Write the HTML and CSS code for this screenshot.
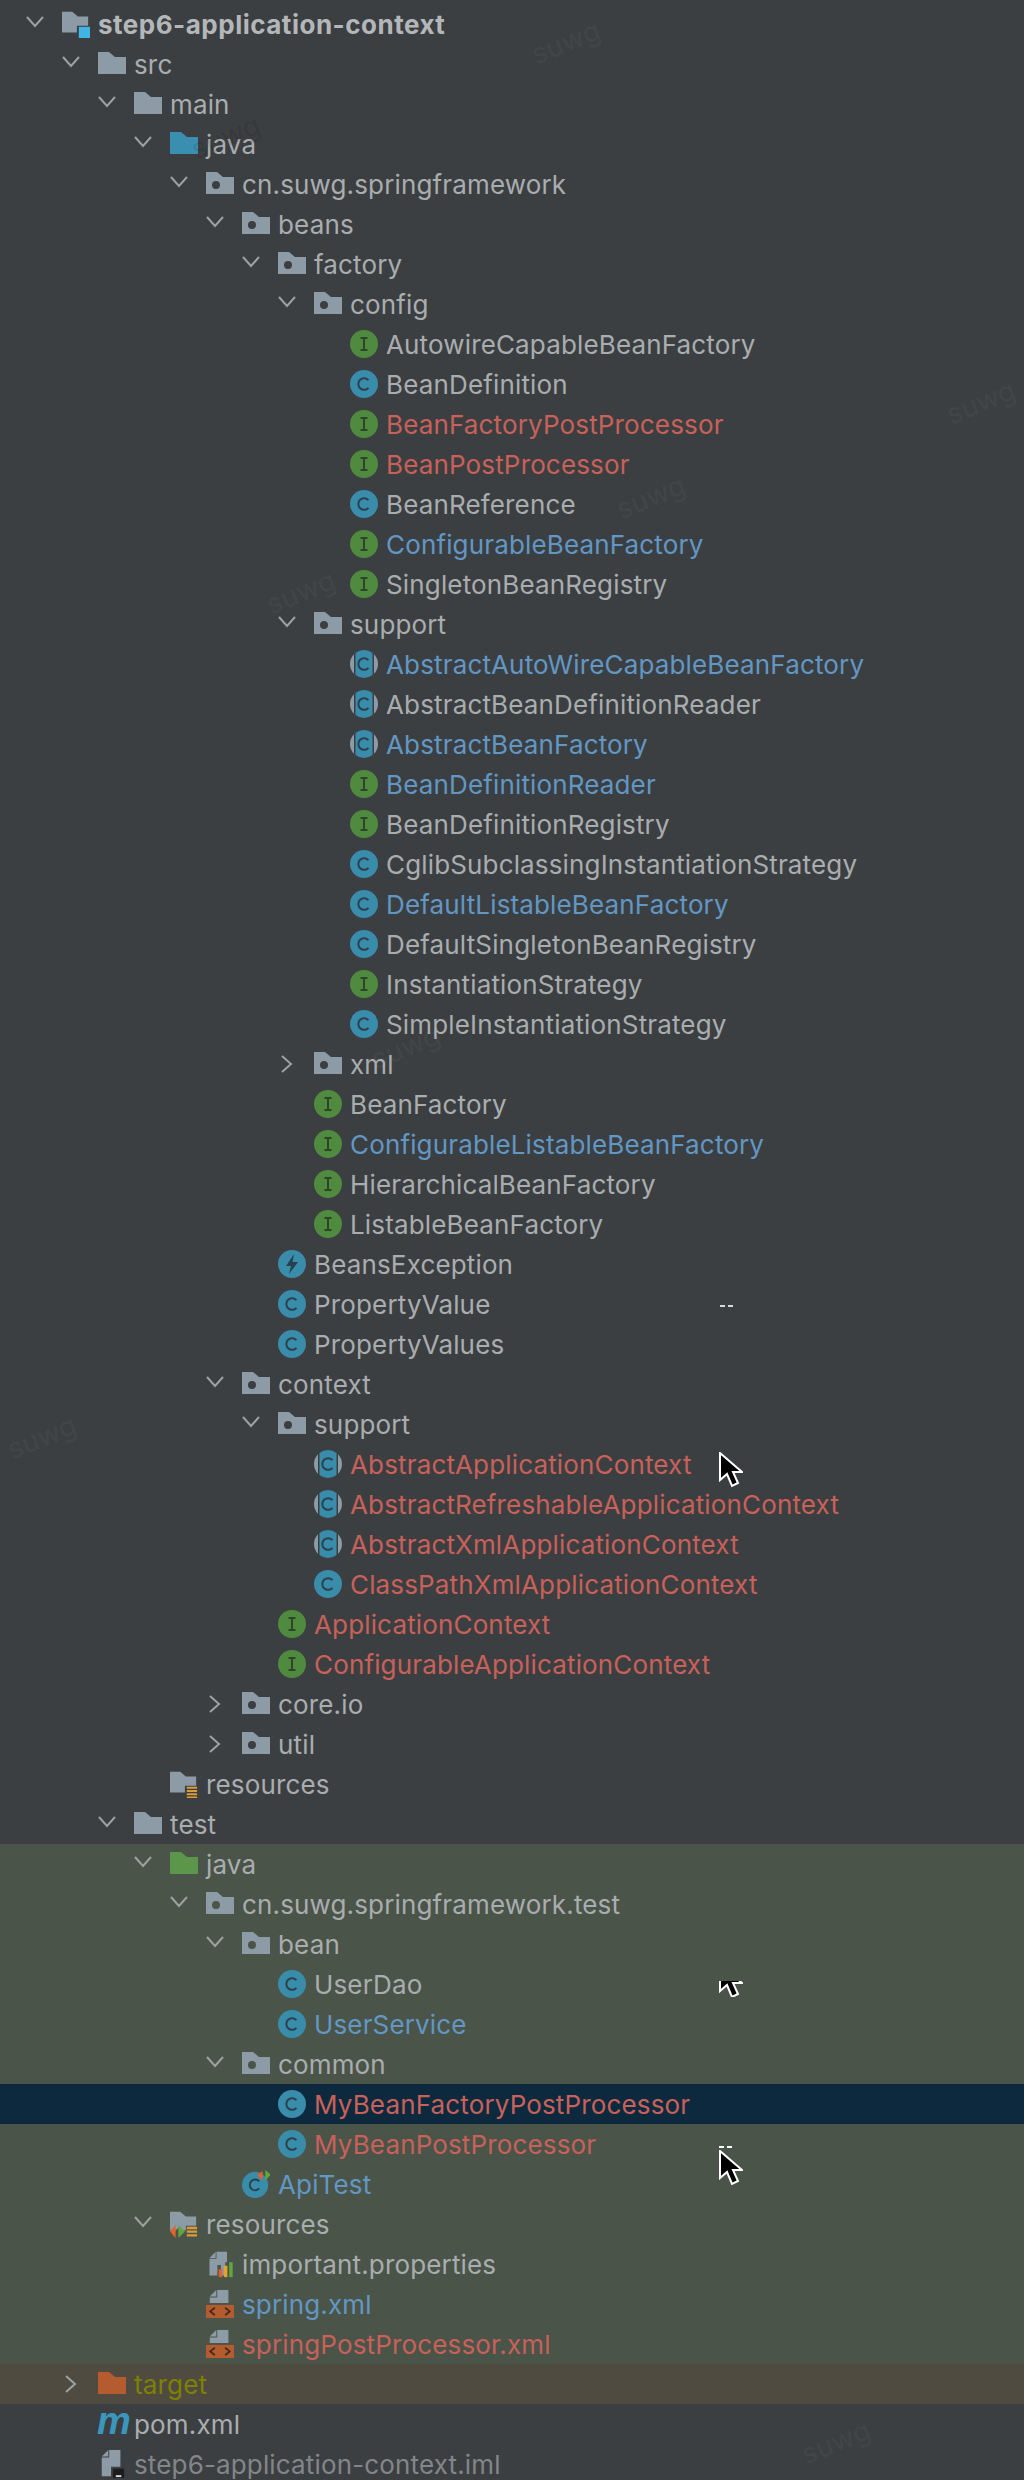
FILE: index.html
```html
<!DOCTYPE html>
<html lang="en">
<head>
  <meta charset="UTF-8">
  <meta name="viewport" content="width=device-width, initial-scale=1.0">
  <title>step6-application-context</title>
  <link rel="stylesheet" href="styles.css">
</head>
<body>

  <!-- icon sprites -->
  <svg class="sprites" width="0" height="0">
    <symbol id="open" viewBox="0 0 18 12"><path d="M1 1l8 9 8-9" fill="none" stroke="currentColor" stroke-width="2"/></symbol>
    <symbol id="closed" viewBox="0 0 12 18"><path d="M1 1l9 8-9 8" fill="none" stroke="currentColor" stroke-width="2"/></symbol>

    <symbol id="folder" viewBox="0 0 28 28"><path d="M0 2h11l6 5h11v17H0z" fill="currentColor"/></symbol>
    <symbol id="package" viewBox="0 0 28 28"><path fill-rule="evenodd" d="M0 2h11l6 5h11v17H0zM10 11a4 4 0 1 0 0 8 4 4 0 0 0 0-8z" fill="currentColor"/></symbol>
    <symbol id="module" viewBox="0 0 30 30"><path d="M0 2h11l6 5h11v10H16v7H0z" fill="#8d9ba6"/><path d="M18 18h12v12H18z" fill="#3fb4e5"/></symbol>
    <symbol id="res" viewBox="0 0 30 30"><path d="M0 2h11l6 5h11v10H16v7H0z" fill="#8d9ba6"/><path d="M18 18h11v2H18zM18 21.500h11v2H18zM18 25h11v2H18zM18 28.500h11v2H18z" fill="#d99b3c"/></symbol>
    <symbol id="restest" viewBox="0 0 30 30"><path d="M0 2h11l6 5h11v10H17v5H12l-3-3-3 3H0z" fill="#8d9ba6"/><path d="M18 18h11v2.500H18zM18 22h11v2.500H18zM18 26h11v2.500H18z" fill="#d99b3c"/><path d="M6 16l-6 7 6 7z" fill="#e2622a"/><path d="M9 16l7 7-7 7z" fill="#5ea83f"/></symbol>

    <symbol id="iface" viewBox="0 0 28 28"><circle cx="14" cy="14" r="14" fill="#4f8a3f"/><path d="M10.500 8h7M10.500 20h7M14 8v12" fill="none" stroke="#2d4529" stroke-width="2"/></symbol>
    <symbol id="class" viewBox="0 0 28 28"><circle cx="14" cy="14" r="14" fill="#3a8cab"/><path d="M18.500 10.200a5.800 5.800 0 1 0 0 7.600" fill="none" stroke="#27414e" stroke-width="2"/></symbol>
    <symbol id="abstract" viewBox="0 0 28 28"><path d="M4 4.200a14 14 0 0 0 0 19.600zM24 4.200a14 14 0 0 1 0 19.600z" fill="#8d9ba6"/><path d="M5.500 2.900a14 14 0 0 1 17 0v22.200a14 14 0 0 1-17 0z" fill="#3a8cab"/><path d="M18.500 10.200a5.800 5.800 0 1 0 0 7.600" fill="none" stroke="#27414e" stroke-width="2"/></symbol>
    <symbol id="exception" viewBox="0 0 28 28"><circle cx="14" cy="14" r="14" fill="#3a8cab"/><path d="M16 4L8 16h5l-2 8 9-12h-5.500z" fill="#27414e"/></symbol>
    <symbol id="testclass" viewBox="0 0 30 30"><circle cx="14" cy="16" r="14" fill="#3a8cab"/><path d="M18.500 12.200a5.800 5.800 0 1 0 0 7.600" fill="none" stroke="#27414e" stroke-width="2"/><path d="M22 1l-6 5 6 5z" fill="#e2622a"/><path d="M25 0l6 5-6 6z" fill="#5ea83f"/></symbol>

    <symbol id="props" viewBox="0 0 32 30"><path d="M4 8l7-7v7zM12 1h12v12h-2v15h-5V16h-4v12H4V9h8z" fill="#8d9ba6"/><path d="M14.500 21h4v9h-4z" fill="#e2622a"/><path d="M20.500 17h4v13h-4z" fill="#e0a32e"/><path d="M26.500 13h4v17h-4z" fill="#5ea83f"/></symbol>
    <symbol id="xml" viewBox="0 0 30 30"><path d="M4 7l7-7v7zM12 0h12v14H4V8h8z" fill="#8d9ba6"/><path d="M0 16h30v14H0z" fill="#b45c2e"/><path d="M9.500 19l-5 4 5 4M20.500 19l5 4-5 4" fill="none" stroke="#3a2a1c" stroke-width="1.800"/></symbol>
    <symbol id="iml" viewBox="0 0 30 30"><path d="M4 7l7-7v7zM12 0h12v18H14v10H4V8h8z" fill="#8d9ba6"/><path d="M16 20h12v12H16z" fill="#1c1c1e"/><path d="M19 27h6v2h-6z" fill="#ddd"/></symbol>
    <symbol id="pointer" viewBox="0 0 24 36"><path d="M1 1v27l7-6 5 12 6-3-5-11h9z" fill="#000" stroke="#fff" stroke-width="2"/></symbol>
  </svg>

  <div class="tree">
    <div class="row l0 root"><svg class="chev"><use href="#open"/></svg><svg class="ico"><use href="#module"/></svg><span>step6-application-context</span></div>
    <div class="row l1"><svg class="chev"><use href="#open"/></svg><svg class="ico grey"><use href="#folder"/></svg><span>src</span></div>
    <div class="row l2"><svg class="chev"><use href="#open"/></svg><svg class="ico grey"><use href="#folder"/></svg><span>main</span></div>
    <div class="row l3"><svg class="chev"><use href="#open"/></svg><svg class="ico blue"><use href="#folder"/></svg><span>java</span></div>
    <div class="row l4"><svg class="chev"><use href="#open"/></svg><svg class="ico grey"><use href="#package"/></svg><span>cn.suwg.springframework</span></div>
    <div class="row l5"><svg class="chev"><use href="#open"/></svg><svg class="ico grey"><use href="#package"/></svg><span>beans</span></div>
    <div class="row l6"><svg class="chev"><use href="#open"/></svg><svg class="ico grey"><use href="#package"/></svg><span>factory</span></div>
    <div class="row l7"><svg class="chev"><use href="#open"/></svg><svg class="ico grey"><use href="#package"/></svg><span>config</span></div>
    <div class="row l9"><svg class="ico"><use href="#iface"/></svg><span>AutowireCapableBeanFactory</span></div>
    <div class="row l9"><svg class="ico"><use href="#class"/></svg><span>BeanDefinition</span></div>
    <div class="row l9 added"><svg class="ico"><use href="#iface"/></svg><span>BeanFactoryPostProcessor</span></div>
    <div class="row l9 added"><svg class="ico"><use href="#iface"/></svg><span>BeanPostProcessor</span></div>
    <div class="row l9"><svg class="ico"><use href="#class"/></svg><span>BeanReference</span></div>
    <div class="row l9 changed"><svg class="ico"><use href="#iface"/></svg><span>ConfigurableBeanFactory</span></div>
    <div class="row l9"><svg class="ico"><use href="#iface"/></svg><span>SingletonBeanRegistry</span></div>
    <div class="row l7"><svg class="chev"><use href="#open"/></svg><svg class="ico grey"><use href="#package"/></svg><span>support</span></div>
    <div class="row l9 changed"><svg class="ico"><use href="#abstract"/></svg><span>AbstractAutoWireCapableBeanFactory</span></div>
    <div class="row l9"><svg class="ico"><use href="#abstract"/></svg><span>AbstractBeanDefinitionReader</span></div>
    <div class="row l9 changed"><svg class="ico"><use href="#abstract"/></svg><span>AbstractBeanFactory</span></div>
    <div class="row l9 changed"><svg class="ico"><use href="#iface"/></svg><span>BeanDefinitionReader</span></div>
    <div class="row l9"><svg class="ico"><use href="#iface"/></svg><span>BeanDefinitionRegistry</span></div>
    <div class="row l9"><svg class="ico"><use href="#class"/></svg><span>CglibSubclassingInstantiationStrategy</span></div>
    <div class="row l9 changed"><svg class="ico"><use href="#class"/></svg><span>DefaultListableBeanFactory</span></div>
    <div class="row l9"><svg class="ico"><use href="#class"/></svg><span>DefaultSingletonBeanRegistry</span></div>
    <div class="row l9"><svg class="ico"><use href="#iface"/></svg><span>InstantiationStrategy</span></div>
    <div class="row l9"><svg class="ico"><use href="#class"/></svg><span>SimpleInstantiationStrategy</span></div>
    <div class="row l7"><svg class="chev-r"><use href="#closed"/></svg><svg class="ico grey"><use href="#package"/></svg><span>xml</span></div>
    <div class="row l8"><svg class="ico"><use href="#iface"/></svg><span>BeanFactory</span></div>
    <div class="row l8 changed"><svg class="ico"><use href="#iface"/></svg><span>ConfigurableListableBeanFactory</span></div>
    <div class="row l8"><svg class="ico"><use href="#iface"/></svg><span>HierarchicalBeanFactory</span></div>
    <div class="row l8"><svg class="ico"><use href="#iface"/></svg><span>ListableBeanFactory</span></div>
    <div class="row l7"><svg class="ico"><use href="#exception"/></svg><span>BeansException</span></div>
    <div class="row l7"><svg class="ico"><use href="#class"/></svg><span>PropertyValue</span></div>
    <div class="row l7"><svg class="ico"><use href="#class"/></svg><span>PropertyValues</span></div>
    <div class="row l5"><svg class="chev"><use href="#open"/></svg><svg class="ico grey"><use href="#package"/></svg><span>context</span></div>
    <div class="row l6"><svg class="chev"><use href="#open"/></svg><svg class="ico grey"><use href="#package"/></svg><span>support</span></div>
    <div class="row l8 added"><svg class="ico"><use href="#abstract"/></svg><span>AbstractApplicationContext</span></div>
    <div class="row l8 added"><svg class="ico"><use href="#abstract"/></svg><span>AbstractRefreshableApplicationContext</span></div>
    <div class="row l8 added"><svg class="ico"><use href="#abstract"/></svg><span>AbstractXmlApplicationContext</span></div>
    <div class="row l8 added"><svg class="ico"><use href="#class"/></svg><span>ClassPathXmlApplicationContext</span></div>
    <div class="row l7 added"><svg class="ico"><use href="#iface"/></svg><span>ApplicationContext</span></div>
    <div class="row l7 added"><svg class="ico"><use href="#iface"/></svg><span>ConfigurableApplicationContext</span></div>
    <div class="row l5"><svg class="chev-r"><use href="#closed"/></svg><svg class="ico grey"><use href="#package"/></svg><span>core.io</span></div>
    <div class="row l5"><svg class="chev-r"><use href="#closed"/></svg><svg class="ico grey"><use href="#package"/></svg><span>util</span></div>
    <div class="row l4"><svg class="ico"><use href="#res"/></svg><span>resources</span></div>
    <div class="row l2"><svg class="chev"><use href="#open"/></svg><svg class="ico grey"><use href="#folder"/></svg><span>test</span></div>

    <!-- test sources -->
    <div class="test-src">
      <div class="row l3"><svg class="chev"><use href="#open"/></svg><svg class="ico green"><use href="#folder"/></svg><span>java</span></div>
      <div class="row l4"><svg class="chev"><use href="#open"/></svg><svg class="ico grey"><use href="#package"/></svg><span>cn.suwg.springframework.test</span></div>
      <div class="row l5"><svg class="chev"><use href="#open"/></svg><svg class="ico grey"><use href="#package"/></svg><span>bean</span></div>
      <div class="row l7"><svg class="ico"><use href="#class"/></svg><span>UserDao</span></div>
      <div class="row l7 changed"><svg class="ico"><use href="#class"/></svg><span>UserService</span></div>
      <div class="row l5"><svg class="chev"><use href="#open"/></svg><svg class="ico grey"><use href="#package"/></svg><span>common</span></div>
      <div class="row l7 added selected"><svg class="ico"><use href="#class"/></svg><span>MyBeanFactoryPostProcessor</span></div>
      <div class="row l7 added"><svg class="ico"><use href="#class"/></svg><span>MyBeanPostProcessor</span></div>
      <div class="row l6 changed"><svg class="ico"><use href="#testclass"/></svg><span>ApiTest</span></div>
      <div class="row l3"><svg class="chev"><use href="#open"/></svg><svg class="ico"><use href="#restest"/></svg><span>resources</span></div>
      <div class="row l5"><svg class="ico"><use href="#props"/></svg><span>important.properties</span></div>
      <div class="row l5 changed"><svg class="ico"><use href="#xml"/></svg><span>spring.xml</span></div>
      <div class="row l5 added"><svg class="ico"><use href="#xml"/></svg><span>springPostProcessor.xml</span></div>
    </div>

    <div class="row l1 excluded"><svg class="chev-r"><use href="#closed"/></svg><svg class="ico orange"><use href="#folder"/></svg><span>target</span></div>
    <div class="row l2"><svg class="ico pom"><text x="-1" y="24">m</text></svg><span>pom.xml</span></div>
    <div class="row l2 dim"><svg class="ico"><use href="#iml"/></svg><span>step6-application-context.iml</span></div>
  </div>

  <!-- mouse trails left in the capture -->
  <svg class="cursor cursor-a"><use href="#pointer"/></svg>
  <div class="trail trail-a"><svg class="cursor-part"><use href="#pointer"/></svg></div>
  <svg class="cursor cursor-b"><use href="#pointer"/></svg>
  <div class="speck speck-a"></div>
  <div class="speck speck-b"></div>

  <!-- page watermark -->
  <span class="mark m1">suwg</span>
  <span class="mark m2">suwg</span>
  <span class="mark m3">suwg</span>
  <span class="mark m4">suwg</span>
  <span class="mark m5">suwg</span>
  <span class="mark m6">suwg</span>
  <span class="mark m7">suwg</span>
  <span class="mark m8">suwg</span>

</body>
</html>
```

FILE: styles.css
```css
html, body {
  margin: 0;
  padding: 0;
  height: 2480px;
  overflow: hidden;
}
body {
  position: relative;
  background-color: #3c3f41;
  font-family: Inter, "Noto Sans", sans-serif;
  font-size: 26px;
  letter-spacing: 0.15px;
  color: #a9adb0;
}
.sprites {
  position: absolute;
}
.tree {
  padding-top: 4px;
}
.row {
  display: flex;
  align-items: center;
  height: 40px;
  box-sizing: border-box;
  white-space: nowrap;
}
.row span {
  margin-left: 8px;
}
.l0 { padding-left: 26px; }
.l1 { padding-left: 62px; }
.l2 { padding-left: 98px; }
.l3 { padding-left: 134px; }
.l4 { padding-left: 170px; }
.l5 { padding-left: 206px; }
.l6 { padding-left: 242px; }
.l7 { padding-left: 278px; }
.l8 { padding-left: 314px; }
.l9 { padding-left: 350px; }

.chev {
  width: 18px;
  height: 12px;
  margin-right: 18px;
  color: #9da1a4;
  position: relative;
  top: -2px;
}
.chev-r {
  width: 12px;
  height: 18px;
  margin-left: 3px;
  margin-right: 21px;
  color: #9da1a4;
}
.ico {
  width: 28px;
  height: 28px;
  flex-shrink: 0;
  overflow: visible;
}
.ico use {
  width: 28px;
  height: 28px;
}
.grey { color: #8d9ba6; }
.blue { color: #3a8fb0; }
.green { color: #5c964a; }
.orange { color: #b45c2e; }

.pom text {
  font-family: "Liberation Sans", sans-serif;
  font-size: 38px;
  font-weight: bold;
  font-style: italic;
  letter-spacing: 0;
  fill: #3a96bd;
}

.root span {
  font-weight: 700;
  letter-spacing: 0.5px;
  color: #b4b7b9;
}
.changed span { color: #6297c4; }
.added span { color: #c7615a; }
.dim span { color: #82868a; }

.test-src {
  background-color: #4b5448;
}
.selected {
  background-color: #0d293e;
}
.excluded {
  background-color: #4f4b41;
}
.excluded span {
  color: #808000;
}

.cursor {
  position: absolute;
  width: 24px;
  height: 36px;
  left: 719px;
}
.cursor-a { top: 1452px; }
.cursor-b { top: 2150px; }
.trail {
  position: absolute;
  left: 719px;
  width: 24px;
  overflow: hidden;
}
.trail-a {
  top: 1981px;
  height: 16px;
}
.cursor-part {
  display: block;
  width: 24px;
  height: 36px;
  margin-top: -18px;
}
.speck {
  position: absolute;
  height: 2px;
  background: repeating-linear-gradient(90deg, #fff 0 5px, transparent 5px 8px);
}
.speck-a {
  left: 720px;
  top: 1305px;
  width: 16px;
  opacity: 0.8;
}
.speck-b {
  left: 719px;
  top: 2146px;
  width: 16px;
}

.mark {
  position: absolute;
  font-size: 28px;
  color: rgba(255, 255, 255, 0.05);
  transform: rotate(-22deg);
}
.m1 { left: 530px; top: 25px; }
.m2 { left: 945px; top: 385px; }
.m3 { left: 615px; top: 480px; }
.m4 { left: 265px; top: 575px; }
.m5 { left: 370px; top: 1030px; }
.m6 { left: 800px; top: 2425px; }
.m7 { left: 6px; top: 1420px; }
.m8 { left: 190px; top: 120px; color: rgba(0, 0, 0, 0.1); }
```
